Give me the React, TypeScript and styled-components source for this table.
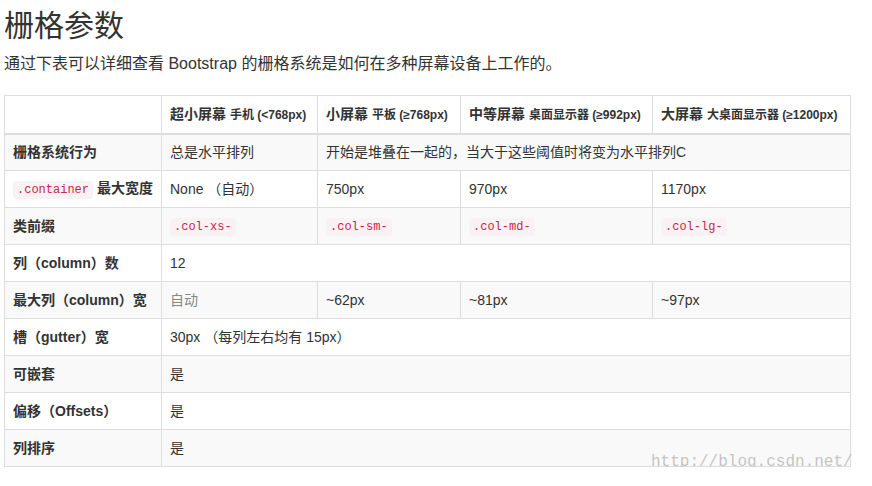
import React from 'react';
import styled, { createGlobalStyle } from 'styled-components';

const GlobalStyle = createGlobalStyle`
  body {
    margin: 0;
    background: #fff;
    color: #333;
    font-family: "Liberation Sans", "Noto Sans CJK SC", sans-serif;
  }
`;

const Page = styled.div`
  position: relative;
  padding: 6px 4px 0;
  width: 846px;
`;

const Title = styled.h1`
  margin: 0;
  font-size: 30px;
  font-weight: 400;
  line-height: 40px;
  color: #333;
`;

const Lead = styled.p`
  margin: 7px 0 20px;
  font-size: 16px;
  line-height: 22px;
`;

const Table = styled.table`
  width: 846px;
  table-layout: fixed;
  border-collapse: collapse;
  border: 1px solid #ddd;
  font-size: 14px;
  line-height: 20px;
`;

const HeadRow = styled.tr`
  height: 38px;
`;

const HeadCell = styled.th`
  padding: 0 8px;
  text-align: left;
  vertical-align: middle;
  font-weight: bold;
  border: 1px solid #ddd;
  border-bottom: 2px solid #ddd;
  white-space: nowrap;
`;

const Small = styled.small`
  font-size: 12px;
`;

const Row = styled.tr<{ $striped?: boolean }>`
  height: 37px;
  background: ${(p) => (p.$striped ? '#f9f9f9' : '#fff')};
`;

const Label = styled.th`
  padding: 0 8px;
  text-align: left;
  vertical-align: middle;
  font-weight: bold;
  border: 1px solid #ddd;
  white-space: nowrap;
`;

const Cell = styled.td<{ $muted?: boolean }>`
  padding: 0 8px;
  vertical-align: middle;
  border: 1px solid #ddd;
  color: ${(p) => (p.$muted ? '#888' : '#333')};
  white-space: nowrap;
`;

const Code = styled.code`
  padding: 2px 4px;
  font-family: "Liberation Mono", "DejaVu Sans Mono", monospace;
  font-size: 12px;
  color: #c7254e;
  background: #f9f2f4;
  border-radius: 4px;
  font-weight: normal;
`;

const Watermark = styled.div`
  position: absolute;
  left: 651px;
  top: 453px;
  font-family: "Liberation Mono", monospace;
  font-size: 16px;
  color: rgba(185, 185, 185, 0.85);
`;

const heads = [
  ['超小屏幕', '手机 (<768px)'],
  ['小屏幕', '平板 (≥768px)'],
  ['中等屏幕', '桌面显示器 (≥992px)'],
  ['大屏幕', '大桌面显示器 (≥1200px)'],
];

export default function App() {
  return (
    <Page>
      <GlobalStyle />
      <Title>栅格参数</Title>
      <Lead>通过下表可以详细查看 Bootstrap 的栅格系统是如何在多种屏幕设备上工作的。</Lead>
      <Table>
        <colgroup>
          <col style={{ width: 157 }} />
          <col style={{ width: 156 }} />
          <col style={{ width: 143 }} />
          <col style={{ width: 192 }} />
          <col style={{ width: 198 }} />
        </colgroup>
        <thead>
          <HeadRow>
            <HeadCell />
            {heads.map(([a, b]) => (
              <HeadCell key={a}>
                {a} <Small>{b}</Small>
              </HeadCell>
            ))}
          </HeadRow>
        </thead>
        <tbody>
          <Row $striped>
            <Label>栅格系统行为</Label>
            <Cell>总是水平排列</Cell>
            <Cell colSpan={3}>开始是堆叠在一起的，当大于这些阈值时将变为水平排列C</Cell>
          </Row>
          <Row>
            <Label>
              <Code>.container</Code> 最大宽度
            </Label>
            <Cell>None （自动）</Cell>
            <Cell>750px</Cell>
            <Cell>970px</Cell>
            <Cell>1170px</Cell>
          </Row>
          <Row $striped>
            <Label>类前缀</Label>
            <Cell><Code>.col-xs-</Code></Cell>
            <Cell><Code>.col-sm-</Code></Cell>
            <Cell><Code>.col-md-</Code></Cell>
            <Cell><Code>.col-lg-</Code></Cell>
          </Row>
          <Row>
            <Label>列（column）数</Label>
            <Cell colSpan={4}>12</Cell>
          </Row>
          <Row $striped>
            <Label>最大列（column）宽</Label>
            <Cell $muted>自动</Cell>
            <Cell>~62px</Cell>
            <Cell>~81px</Cell>
            <Cell>~97px</Cell>
          </Row>
          <Row>
            <Label>槽（gutter）宽</Label>
            <Cell colSpan={4}>30px （每列左右均有 15px）</Cell>
          </Row>
          <Row $striped>
            <Label>可嵌套</Label>
            <Cell colSpan={4}>是</Cell>
          </Row>
          <Row>
            <Label>偏移（Offsets）</Label>
            <Cell colSpan={4}>是</Cell>
          </Row>
          <Row $striped>
            <Label>列排序</Label>
            <Cell colSpan={4}>是</Cell>
          </Row>
        </tbody>
      </Table>
      <Watermark>http://blog.csdn.net/</Watermark>
    </Page>
  );
}
